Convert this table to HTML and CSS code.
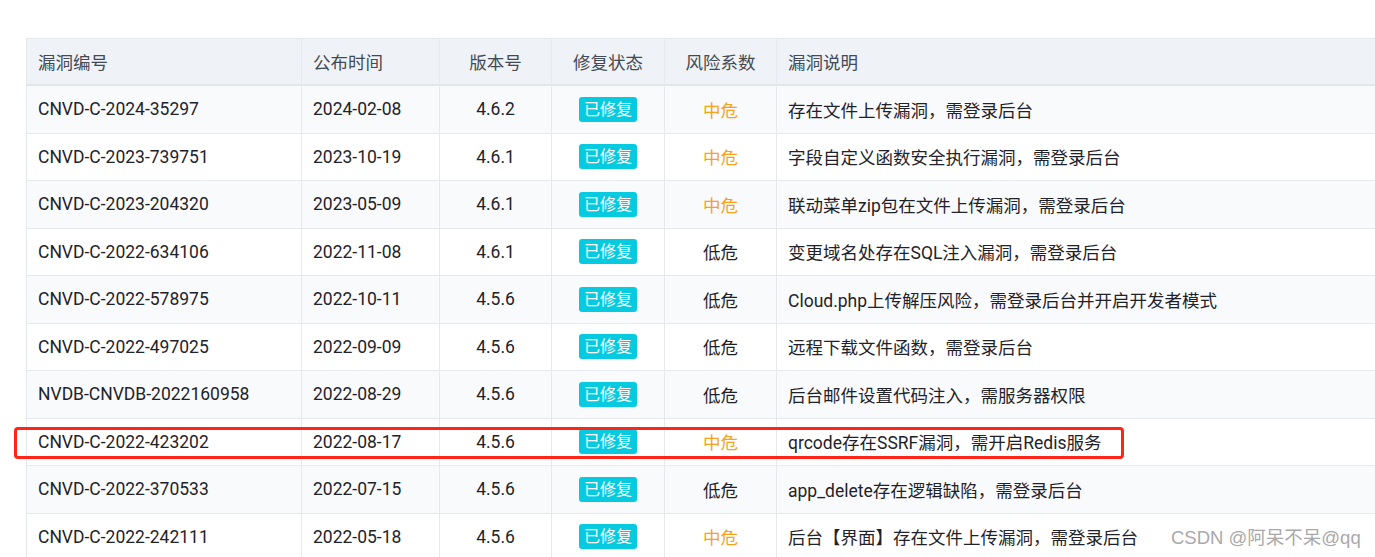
FILE: index.html
```html
<!DOCTYPE html>
<html lang="zh-CN">
<head>
<meta charset="utf-8">
<title>漏洞列表</title>
<link rel="stylesheet" href="styles.css">
</head>
<body>
<div class="page">
  <div class="table">
    <div class="row head">
      <div class="cell left">漏洞编号</div>
      <div class="cell left">公布时间</div>
      <div class="cell center">版本号</div>
      <div class="cell center">修复状态</div>
      <div class="cell center">风险系数</div>
      <div class="cell left">漏洞说明</div>
    </div>
    <div class="row stripe">
      <div class="cell left">CNVD-C-2024-35297</div>
      <div class="cell left">2024-02-08</div>
      <div class="cell center">4.6.2</div>
      <div class="cell center"><span class="badge">已修复</span></div>
      <div class="cell center mid">中危</div>
      <div class="cell left">存在文件上传漏洞，需登录后台</div>
    </div>
    <div class="row">
      <div class="cell left">CNVD-C-2023-739751</div>
      <div class="cell left">2023-10-19</div>
      <div class="cell center">4.6.1</div>
      <div class="cell center"><span class="badge">已修复</span></div>
      <div class="cell center mid">中危</div>
      <div class="cell left">字段自定义函数安全执行漏洞，需登录后台</div>
    </div>
    <div class="row stripe">
      <div class="cell left">CNVD-C-2023-204320</div>
      <div class="cell left">2023-05-09</div>
      <div class="cell center">4.6.1</div>
      <div class="cell center"><span class="badge">已修复</span></div>
      <div class="cell center mid">中危</div>
      <div class="cell left">联动菜单zip包在文件上传漏洞，需登录后台</div>
    </div>
    <div class="row">
      <div class="cell left">CNVD-C-2022-634106</div>
      <div class="cell left">2022-11-08</div>
      <div class="cell center">4.6.1</div>
      <div class="cell center"><span class="badge">已修复</span></div>
      <div class="cell center">低危</div>
      <div class="cell left">变更域名处存在SQL注入漏洞，需登录后台</div>
    </div>
    <div class="row stripe">
      <div class="cell left">CNVD-C-2022-578975</div>
      <div class="cell left">2022-10-11</div>
      <div class="cell center">4.5.6</div>
      <div class="cell center"><span class="badge">已修复</span></div>
      <div class="cell center">低危</div>
      <div class="cell left">Cloud.php上传解压风险，需登录后台并开启开发者模式</div>
    </div>
    <div class="row">
      <div class="cell left">CNVD-C-2022-497025</div>
      <div class="cell left">2022-09-09</div>
      <div class="cell center">4.5.6</div>
      <div class="cell center"><span class="badge">已修复</span></div>
      <div class="cell center">低危</div>
      <div class="cell left">远程下载文件函数，需登录后台</div>
    </div>
    <div class="row stripe">
      <div class="cell left">NVDB-CNVDB-2022160958</div>
      <div class="cell left">2022-08-29</div>
      <div class="cell center">4.5.6</div>
      <div class="cell center"><span class="badge">已修复</span></div>
      <div class="cell center">低危</div>
      <div class="cell left">后台邮件设置代码注入，需服务器权限</div>
    </div>
    <div class="row">
      <div class="cell left">CNVD-C-2022-423202</div>
      <div class="cell left">2022-08-17</div>
      <div class="cell center">4.5.6</div>
      <div class="cell center"><span class="badge">已修复</span></div>
      <div class="cell center mid">中危</div>
      <div class="cell left">qrcode存在SSRF漏洞，需开启Redis服务</div>
    </div>
    <div class="row stripe">
      <div class="cell left">CNVD-C-2022-370533</div>
      <div class="cell left">2022-07-15</div>
      <div class="cell center">4.5.6</div>
      <div class="cell center"><span class="badge">已修复</span></div>
      <div class="cell center">低危</div>
      <div class="cell left">app_delete存在逻辑缺陷，需登录后台</div>
    </div>
    <div class="row">
      <div class="cell left">CNVD-C-2022-242111</div>
      <div class="cell left">2022-05-18</div>
      <div class="cell center">4.5.6</div>
      <div class="cell center"><span class="badge">已修复</span></div>
      <div class="cell center mid">中危</div>
      <div class="cell left">后台【界面】存在文件上传漏洞，需登录后台</div>
    </div>
  </div>
  <div class="highlight"></div>
  <div class="watermark">CSDN @阿呆不呆@qq</div>
</div>
</body>
</html>
```

FILE: styles.css
```css
html, body {
  margin: 0;
  padding: 0;
  background: #ffffff;
  overflow: hidden;
}
.page {
  position: relative;
  width: 1375px;
  height: 557px;
  overflow: hidden;
  padding: 38px 0 0 26px;
  box-sizing: border-box;
  font-family: Roboto, "Noto Sans CJK SC", sans-serif;
  font-size: 17.5px;
  color: #1f2329;
}
.table {
  width: 1420px;
  border-top: 1px solid #e4e7ec;
  border-left: 1px solid #e4e7ec;
}
.row {
  display: grid;
  grid-template-columns: 275px 138px 112px 113px 112px 1fr;
  height: 47.5px;
  box-sizing: border-box;
  border-bottom: 1px solid #e6e9ee;
  background: #ffffff;
}
.row.stripe {
  background: #f9fafc;
}
.row.head {
  background: #eff2f6;
  color: #444a54;
  height: 47px;
  border-bottom: 2px solid #e2e6eb;
}
.cell {
  display: flex;
  align-items: center;
  border-right: 1px solid #e6e9ee;
  padding: 0 11px;
  white-space: nowrap;
  overflow: hidden;
}
.cell.left {
  justify-content: flex-start;
}
.cell.center {
  justify-content: center;
}
.cell.mid {
  color: #f7a31a;
}
.badge {
  display: inline-block;
  width: 58px;
  height: 25px;
  line-height: 25px;
  border-radius: 3px;
  background: #06cbe0;
  color: #ffffff;
  font-size: 16px;
  text-align: center;
}
.highlight {
  position: absolute;
  left: 14px;
  top: 427px;
  width: 1110px;
  height: 32px;
  box-sizing: border-box;
  border: 3px solid #ff2418;
  border-radius: 4px;
}
.watermark {
  position: absolute;
  left: 1171px;
  top: 523px;
  font-family: "Liberation Sans", "Noto Sans CJK SC", sans-serif;
  font-size: 18.5px;
  color: #a9a9a9;
  text-shadow: 0 1px 1px rgba(255,255,255,0.8);
  white-space: nowrap;
}
```
